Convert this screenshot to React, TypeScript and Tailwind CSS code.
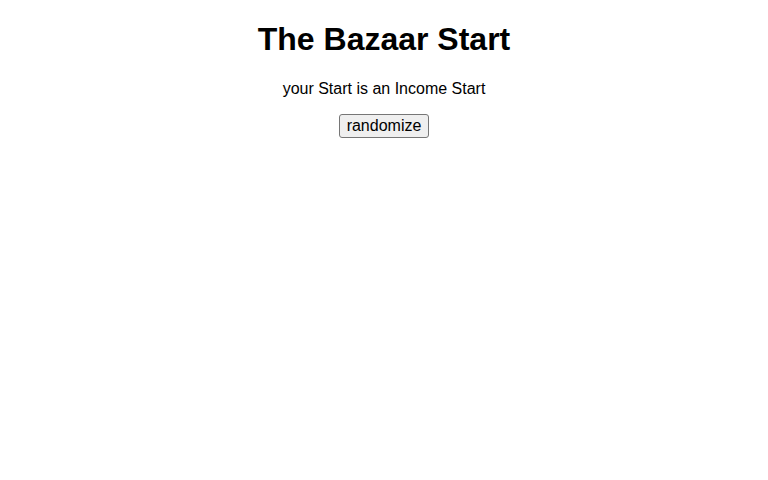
import { useState } from "react";

const STARTS = ["Income", "Growth", "Defense", "Economy", "Tempo"];

export default function App() {
  const [start, setStart] = useState("Income");

  const randomize = () => {
    setStart(STARTS[Math.floor(Math.random() * STARTS.length)]);
  };

  return (
    <div className="min-h-screen bg-white text-black text-center font-['Liberation_Sans',Arial,sans-serif] leading-[normal]">
      <h1 className="text-[32px] font-bold my-[21.44px] leading-[normal]">The Bazaar Start</h1>
      <p className="text-base my-4 leading-[normal]">your Start is an {start} Start</p>
      <button
        onClick={randomize}
        className="text-base leading-[normal] px-[7px] py-[2px] bg-[#efefef] border border-[#767676] rounded-[3px] text-black hover:bg-[#e5e5e5]"
      >
        randomize
      </button>
    </div>
  );
}
